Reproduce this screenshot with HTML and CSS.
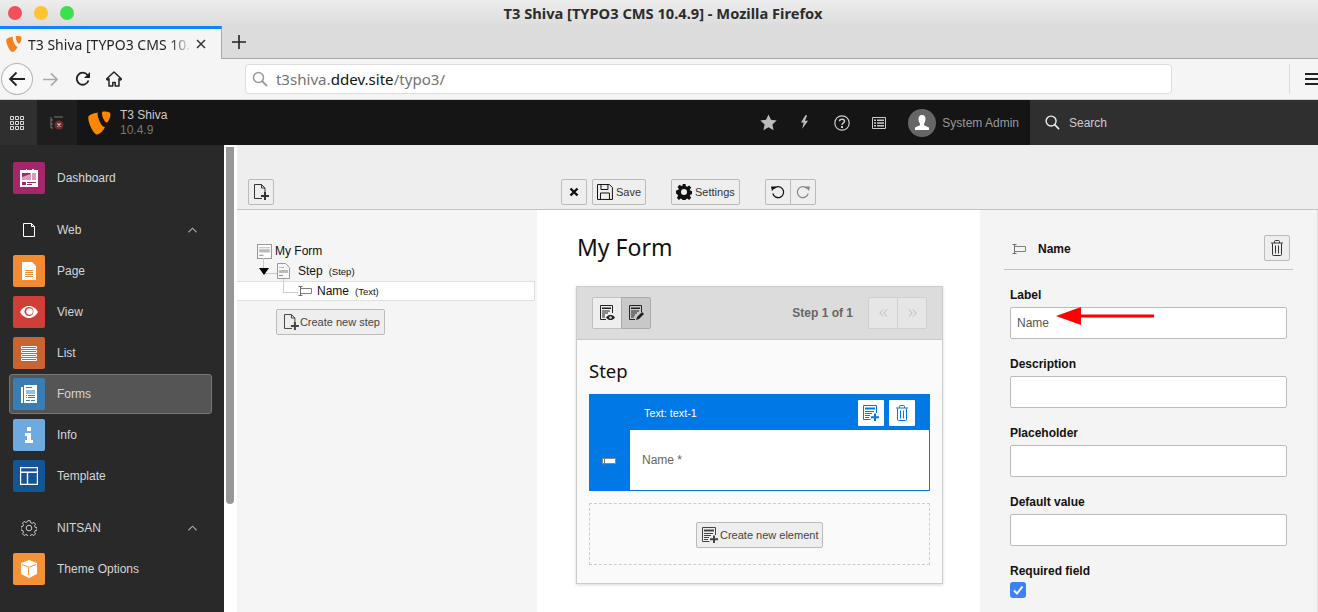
FILE: index.html
```html
<!DOCTYPE html>
<html lang="en">
<head>
<meta charset="utf-8">
<title>T3 Shiva [TYPO3 CMS 10.4.9]</title>
<link rel="stylesheet" href="styles.css">
</head>
<body>
<svg class="sprites" width="0" height="0" aria-hidden="true">
  <symbol id="t3" viewBox="0 0 16 16"><path d="M11.9 10.6c-.2.1-.4.1-.6.1-1.9 0-4.6-6.5-4.6-8.7 0-.8.2-1.1.5-1.3C4.9.9 1.6 1.9.5 3.2.3 3.5.2 3.9.2 4.5c0 3.3 3.6 11.5 6.2 11.5 1.6 0 4.3-2.6 5.5-5.4zM10.7 0c2.4 0 4.9.4 4.9 1.7 0 2.7-1.7 6-2.6 6C11.5 7.7 9.7 3.4 9.7 1.3c0-1 .4-1.3 1-1.3z"/></symbol>
  <symbol id="newpage" viewBox="0 0 16 16"><path d="M9 14.500H1.500V.5h7l3.500 3.500v4.500M8.500.5V4H12" fill="none" stroke="currentColor"/><path d="M11 8h2v3h3v2h-3v3h-2v-3H8v-2h3z" fill="currentColor"/></symbol>
  <symbol id="newel" viewBox="0 0 16 16"><path d="M7.500 14.500H.5V.5h13V8" fill="none" stroke="currentColor"/><path d="M2 2.500h10v2H2zM2 6h9v1H2zM2 8h7v1H2zM2 10h5v1H2zM2 12h4v1H2z" fill="currentColor"/><path d="M11 8.500h2v2.800h3v2h-3V16h-2v-2.700H8v-2h3z" fill="currentColor"/></symbol>
  <symbol id="trash" viewBox="0 0 16 16"><path d="M3.500 3.500v11a1 1 0 0 0 1 1h7a1 1 0 0 0 1-1v-11M2 3h12M5.500 3V1.500a1 1 0 0 1 1-1h3a1 1 0 0 1 1 1V3M6.500 5.500v8M9.500 5.500v8" fill="none" stroke="currentColor"/></symbol>
  <symbol id="field" viewBox="0 0 15 10"><path d="M3.500 2.500h11v5h-11z" fill="none" stroke="#808080"/><path d="M1.500.5h4M1.500 9.500h4M3.500.5v9" fill="none" stroke="#707070"/></symbol>
  <symbol id="chev" viewBox="0 0 10 6"><path d="M.5 5.500 5 1l4.500 4.500" fill="none" stroke="#aaa" stroke-width="1.200"/></symbol>
</svg>

<header class="titlebar">
  <div class="lights"><i class="light red"></i><i class="light yellow"></i><i class="light green"></i></div>
  <div class="wintitle">T3 Shiva [TYPO3 CMS 10.4.9] - Mozilla Firefox</div>
</header>

<div class="tabstrip">
  <div class="tab">
    <svg class="tab-logo"><use href="#t3"/></svg>
    <span class="tab-label">T3 Shiva [TYPO3 CMS 10.</span>
    <svg class="tab-x" viewBox="0 0 10 10"><path d="M1 1l8 8M9 1l-8 8" stroke="#333" stroke-width="1.500"/></svg>
  </div>
  <svg class="newtab" viewBox="0 0 14 14"><path d="M7 0v14M0 7h14" stroke="#222" stroke-width="1.600"/></svg>
</div>

<nav class="navbar">
  <div class="nav-back"><svg viewBox="0 0 18 16" width="18" height="16"><path d="M17 8H2M8.500 1.500 2 8l6.500 6.500" fill="none" stroke="#222" stroke-width="1.800"/></svg></div>
  <svg class="nav-fwd" viewBox="0 0 18 16" width="17" height="15"><path d="M1 8h15M9.500 1.500 16 8l-6.500 6.500" fill="none" stroke="#aaa" stroke-width="1.800"/></svg>
  <svg class="nav-reload" viewBox="0 0 16 16" width="16" height="16"><path d="M13.500 9.500A6 6 0 1 1 12.500 4" fill="none" stroke="#222" stroke-width="1.800"/><path d="M15 1v6H9z" fill="#222"/></svg>
  <svg class="nav-home" viewBox="0 0 16 16" width="16" height="16"><path d="M8 1 .5 8l1 1L3 7.700V15h3.800v-3.500h2.400V15H13V7.700L14.500 9l1-1z" fill="none" stroke="#222" stroke-width="1.500" stroke-linejoin="round"/></svg>
  <div class="urlbar">
    <svg viewBox="0 0 16 16" width="16" height="16"><circle cx="6.500" cy="6.500" r="5" fill="none" stroke="#999" stroke-width="1.500"/><path d="M10 10l5 5" stroke="#999" stroke-width="1.800"/></svg>
    <span class="url"><span>t3shiva.</span><b>ddev.site</b><span>/typo3/</span></span>
  </div>
  <div class="nav-sep"></div>
  <div class="burger"><i></i><i></i><i></i></div>
</nav>

<div class="topbar">
  <div class="tb-apps">
    <svg viewBox="0 0 14 14" width="14" height="14"><path d="M.5.500h3v3h-3zM5.500.500h3v3h-3zM10.500.500h3v3h-3zM.5 5.500h3v3h-3zM5.500 5.500h3v3h-3zM10.500 5.500h3v3h-3zM.5 10.500h3v3h-3zM5.500 10.500h3v3h-3zM10.500 10.500h3v3h-3z" fill="none" stroke="#ddd"/></svg>
  </div>
  <div class="tb-tree">
    <svg viewBox="0 0 14 14" width="14" height="14"><path d="M4 1h9M1 1v11M1 4h2M1 8h2M1 12h2" stroke="#777" fill="none"/><circle cx="9" cy="9" r="4.500" fill="#7a2a2a"/><path d="M7.500 7.500l3 3M10.500 7.500l-3 3" stroke="#ccc" stroke-width="1.200"/></svg>
  </div>
  <svg class="tb-logo"><use href="#t3"/></svg>
  <div class="tb-site"><div>T3 Shiva</div><div class="tb-ver">10.4.9</div></div>
  <div class="tb-spacer"></div>
  <svg class="tb-star" viewBox="0 0 16 16" width="17" height="17"><path d="M8 .5l2.300 5 5.400.6-4 3.700 1.100 5.400L8 12.500l-4.800 2.700 1.100-5.400-4-3.700 5.400-.6z" fill="#bbb"/></svg>
  <svg class="tb-bolt" viewBox="0 0 10 16" width="9" height="15"><path d="M6 0 1 8h3L2.500 15 9 6H5.500L8 0z" fill="#bbb"/></svg>
  <svg class="tb-help" viewBox="0 0 16 16" width="16" height="16"><circle cx="8" cy="8" r="7.200" fill="none" stroke="#ccc" stroke-width="1.200"/><path d="M5.500 6.200C5.500 3.500 10.500 3.500 10.500 6.200 10.500 8 8 8 8 10" fill="none" stroke="#ccc" stroke-width="1.500"/><path d="M7 11h2v2H7z" fill="#ccc"/></svg>
  <svg class="tb-list" viewBox="0 0 14 14" width="14" height="14"><path d="M.5 1.500h13v11H.5z" fill="none" stroke="#ccc"/><path d="M2 3.500h2v1.500H2zM5 3.500h7v1.500H5zM2 6.300h2v1.500H2zM5 6.300h7v1.500H5zM2 9h2v1.500H2zM5 9h7v1.500H5z" fill="#ccc"/></svg>
  <div class="tb-avatar"><svg viewBox="0 0 28 28" width="28" height="28"><circle cx="14" cy="14" r="14" fill="#666"/><path d="M14 6c2.500 0 3.700 2 3.500 4.500-.2 2-1 3.500-1.500 4.200v1.500l5 2.300V21H7v-2.500l5-2.300v-1.500c-.5-.7-1.300-2.200-1.500-4.200C10.300 8 11.500 6 14 6z" fill="#fff"/></svg></div>
  <div class="tb-user">System Admin</div>
  <div class="tb-search">
    <svg viewBox="0 0 16 16" width="15" height="15"><circle cx="6.500" cy="6.500" r="5.300" fill="none" stroke="#eee" stroke-width="1.500"/><path d="M10.300 10.300l4.700 4.700" stroke="#eee" stroke-width="1.700"/></svg>
    <span>Search</span>
  </div>
</div>

<div class="backend">
  <aside class="sidebar">
    <a class="mod"><span class="mod-ic c-dash"><svg viewBox="0 0 18 18" width="18" height="18"><path d="M0 1h6V0h12v18H0z" fill="#fff"/><path d="M7 0h5v1H7zM14 0h4v1h-4z" fill="#a4276a"/><path d="M2 4h8.500v7H2zM12 4h4v7h-4zM2 13h4v3H2zM7 13h9v1H7zM7 15h5v1H7z" fill="#a4276a"/><path d="M2 8l8.500-3v6H2zM12 4h4v7h-4z" fill="#d79dbd"/></svg></span><span>Dashboard</span></a>
    <div class="group">
      <div class="grp-head"><span class="grp-ic"><svg viewBox="0 0 12 14" width="12" height="14"><path d="M.5.500h8l3 3v10H.5z" fill="none" stroke="#fff"/><path d="M8.500.500v3h3" fill="none" stroke="#fff"/></svg></span><span class="grp-name">Web</span><svg class="chev"><use href="#chev"/></svg></div>
      <a class="mod"><span class="mod-ic c-page"><svg viewBox="0 0 14 18" width="14" height="18"><path d="M0 0h10l4 4v14H0z" fill="#fff"/><path d="M3 8h8v1H3zM3 10h8v1H3zM3 12h8v1H3zM3 14h8v1H3z" fill="#f28b33"/></svg></span><span>Page</span></a>
      <a class="mod"><span class="mod-ic c-view"><svg viewBox="0 0 18 12" width="18" height="12"><path d="M0 6c2-3.500 5-6 9-6s7 2.500 9 6c-2 3.500-5 6-9 6s-7-2.500-9-6z" fill="#fff"/><circle cx="9" cy="5.500" r="4.500" fill="#cf3f37"/><circle cx="9.500" cy="5.500" r="3.300" fill="#fff"/></svg></span><span>View</span></a>
      <a class="mod"><span class="mod-ic c-list"><svg viewBox="0 0 16 15" width="16" height="15"><path d="M.5.500h15v2H.5zM.5 4.500h15v2H.5zM.5 8.500h15v2H.5zM.5 12.500h15v2H.5z" fill="none" stroke="#fff"/></svg></span><span>List</span></a>
      <a class="mod active"><span class="mod-ic c-forms"><svg viewBox="0 0 16 18" width="16" height="18"><path d="M3 0h13v18H3zM0 2h2v16H0z" fill="#fff"/><path d="M5 2h6v1H5zM5 10h1v1H5zM7 10h7v1H7zM5 12h1v1H5zM7 12h7v1H7zM5 15h4v1H5zM10 15h4v1h-4z" fill="#3a7db3"/><path d="M5 5h9v4H5z" fill="#9dbfda"/></svg></span><span>Forms</span></a>
      <a class="mod"><span class="mod-ic c-info"><svg viewBox="0 0 8 16" width="8" height="16"><path d="M2 0h4v4H2zM0 6h6v7h2v3H0v-3h2V9H0z" fill="#fff"/></svg></span><span>Info</span></a>
      <a class="mod"><span class="mod-ic c-tpl"><svg viewBox="0 0 18 18" width="18" height="18"><path d="M.6.6h16.800v16.800H.6z" fill="none" stroke="#fff" stroke-width="1.200"/><path d="M1 4.500h16v1.400H1zM6.800 5.500h1.400V17H6.800z" fill="#fff"/></svg></span><span>Template</span></a>
    </div>
    <div class="group">
      <div class="grp-head"><span class="grp-ic"><svg viewBox="0 0 16 16" width="16" height="16"><path d="M6.800.7h2.400l.4 2 1.500.7 1.800-1 1.600 1.700-1 1.700.6 1.500 2 .5v2.400l-2 .4-.6 1.500 1 1.800-1.600 1.600-1.800-1-1.500.6-.4 2H6.800l-.4-2-1.500-.6-1.800 1-1.600-1.600 1-1.800-.6-1.500-2-.4V6.800l2-.5.600-1.500-1-1.700 1.600-1.700 1.800 1 1.500-.7z" fill="none" stroke="#ccc"/><circle cx="8" cy="8" r="2.800" fill="none" stroke="#ccc"/></svg></span><span class="grp-name">NITSAN</span><svg class="chev"><use href="#chev"/></svg></div>
      <a class="mod"><span class="mod-ic c-theme"><svg viewBox="0 0 18 18" width="18" height="18"><path d="M9 0l8 3v11l-8 4-8-4V3z" fill="#fff"/><path d="M2 4.500l6.500 2.500v8M16 4.500 9.500 7" fill="none" stroke="#f39237"/></svg></span><span>Theme Options</span></a>
    </div>
  </aside>
  <div class="scrolltrack"><div class="scrollthumb"></div></div>

  <main class="module">
    <div class="docheader">
      <div class="dh-left"><button class="btn ico"><svg width="16" height="16"><use href="#newpage"/></svg></button></div>
      <div class="dh-mid">
        <button class="btn ico"><svg viewBox="0 0 10 10" width="10" height="10"><path d="M1.500 1.500l7 7M8.500 1.500l-7 7" stroke="#111" stroke-width="2.400"/></svg></button>
        <button class="btn save"><svg viewBox="0 0 16 16" width="16" height="16"><path d="M.5.500h12l3 3v12H.5z" fill="none" stroke="#111"/><path d="M4 .5v5h7v-5M3.500 15.500V9h9v6.500" fill="none" stroke="#111"/></svg><span class="lbl">Save</span></button>
        <button class="btn settings"><svg viewBox="0 0 16 16" width="16" height="16"><path fill-rule="evenodd" d="M6.500 0h3l.4 2.200 1.300.6 1.900-1.300 2.100 2.100-1.300 1.900.6 1.300 2.200.4v3l-2.200.4-.6 1.300 1.300 1.900-2.100 2.100-1.900-1.300-1.300.6-.4 2.200h-3l-.4-2.200-1.300-.6-1.900 1.300-2.100-2.100 1.300-1.900-.6-1.300L0 9.500v-3l2.200-.4.600-1.300L1.500 2.900l2.100-2.100 1.900 1.300 1.300-.6zM8 5a3 3 0 1 0 0 6 3 3 0 0 0 0-6z" fill="#111"/></svg><span class="lbl">Settings</span></button>
        <div class="btn-pair">
          <button class="btn ico"><svg viewBox="0 0 14 14" width="14" height="14"><path d="M3 3.500A5.500 5.500 0 1 1 1.800 8.500" fill="none" stroke="#111" stroke-width="1.200"/><path d="M0 1.500l5 0L1 6z" fill="#111"/></svg></button>
          <button class="btn ico off"><svg viewBox="0 0 14 14" width="14" height="14"><path d="M11 3.500A5.500 5.500 0 1 0 12.200 8.500" fill="none" stroke="#888" stroke-width="1.200"/><path d="M14 1.500l-5 0 4 4.500z" fill="#888"/></svg></button>
        </div>
      </div>
    </div>
    <div class="panes">
      <section class="tree">
        <div class="t-row t-root"><svg class="t-form" viewBox="0 0 14 14" width="15" height="15"><path d="M.5.500h13v13H.5z" fill="#fff" stroke="#999"/><path d="M2 3h10v1H2zM2 5h10v3H2z" fill="#bbb"/><path d="M2 10h4v1H2z" fill="#5a9bd8"/></svg><span>My Form</span></div>
        <div class="t-row t-step"><span class="t-caret"></span><svg viewBox="0 0 13 16" width="13" height="16"><path d="M.5.500h8l4 4v11H.5z" fill="#f8f8f8" stroke="#999"/><path d="M2 4h5v1H2zM2 7h9v3H2z" fill="#bbb"/><path d="M2 12h4v1H2z" fill="#5a9bd8"/></svg><span>Step</span><small>(Step)</small></div>
        <div class="t-row t-name"><svg width="15" height="10"><use href="#field"/></svg><span>Name</span><small>(Text)</small></div>
        <button class="btn new-step"><svg width="16" height="16"><use href="#newpage"/></svg><span class="lbl">Create new step</span></button>
      </section>
      <section class="stage">
        <h1>My Form</h1>
        <div class="card">
          <div class="card-head">
            <div class="mode">
              <button class="mode-btn"><svg viewBox="0 0 16 16" width="16" height="16"><path d="M7 14.500H1.500V.5h12V8" fill="none" stroke="#222"/><path d="M3 2.500h9v1.500H3zM3 5.500h8v1H3zM3 7.500h6v1H3zM3 9.500h3v1H3zM3 11.500h3v1H3z" fill="#222"/><path d="M7 12.500c1.500-2 3-2.500 4.500-2.500s3 .5 4.500 2.500c-1.500 2-3 2.500-4.500 2.500S8.500 14.500 7 12.500z" fill="#222"/><circle cx="11.500" cy="12.500" r="1.300" fill="#ddd"/></svg></button>
              <button class="mode-btn on"><svg viewBox="0 0 16 16" width="16" height="16"><path d="M7 14.500H1.500V.5h12V7" fill="none" stroke="#222"/><path d="M3 2.500h9v1.500H3zM3 5.500h8v1H3zM3 7.500h6v1H3zM3 9.500h4v1H3zM3 11.500h3v1H3z" fill="#222"/><path d="M8 15l1-3 5-5 2 2-5 5z" fill="#222"/></svg></button>
            </div>
            <div class="stepcount">Step 1 of 1</div>
            <div class="pager">
              <button class="pg-btn"><svg viewBox="0 0 9 8" width="9" height="8"><path d="M4 .5.8 4 4 7.500M8 .5 4.800 4 8 7.500" fill="none" stroke="#bbb"/></svg></button>
              <button class="pg-btn"><svg viewBox="0 0 9 8" width="9" height="8"><path d="M1 .5 4.200 4 1 7.500M5 .5 8.200 4 5 7.500" fill="none" stroke="#bbb"/></svg></button>
            </div>
          </div>
          <div class="card-body">
            <h2>Step</h2>
            <div class="el">
              <div class="el-grip"><svg viewBox="0 0 14 8" width="14" height="8"><path d="M.5 1.500h13v5H.5z" fill="#fff" stroke="#888"/><path d="M2.500 0v8" stroke="#777"/></svg></div>
              <div class="el-main">
                <div class="el-head"><span class="el-title">Text: text-1</span>
                  <div class="el-tools">
                    <button class="el-btn"><svg width="16" height="16"><use href="#newel"/></svg></button>
                    <button class="el-btn"><svg width="16" height="16"><use href="#trash"/></svg></button>
                  </div>
                </div>
                <div class="el-body">Name *</div>
              </div>
            </div>
            <div class="dropzone"><button class="btn new-el"><svg width="16" height="16"><use href="#newel"/></svg><span class="lbl">Create new element</span></button></div>
          </div>
        </div>
      </section>
      <section class="inspector">
        <div class="ins-head">
          <svg width="15" height="10"><use href="#field"/></svg>
          <b>Name</b>
          <button class="btn ico"><svg width="16" height="16"><use href="#trash"/></svg></button>
        </div>
        <div class="fieldset">
          <label class="f">Label<span class="input">Name</span>
            <svg class="arrow" viewBox="0 0 98 18" width="98" height="18"><path d="M0 9 25 0v7.500h73v3H25V18z" fill="#f00"/></svg>
          </label>
          <label class="f">Description<span class="input"></span></label>
          <label class="f">Placeholder<span class="input"></span></label>
          <label class="f">Default value<span class="input"></span></label>
          <label class="f">Required field<span class="check"><svg viewBox="0 0 12 12" width="12" height="12"><path d="M2 6.500 5 9.500 10.500 2.500" fill="none" stroke="#fff" stroke-width="2"/></svg></span></label>
        </div>
      </section>
    </div>
  </main>
</div>
</body>
</html>
```
FILE: styles.css
```css
* { box-sizing: border-box; }
html, body { margin: 0; height: 612px; overflow: hidden; }
body { display: flex; flex-direction: column; width: 1318px; font: 12px/1.2 "Liberation Sans", Arial, sans-serif; color: #333; background: #fff; }
.sprites { position: absolute; }
button { font: inherit; margin: 0; }

.titlebar { flex: 0 0 26px; display: flex; align-items: center; position: relative; background: linear-gradient(#ededed, #dcdcdc); }
.lights { display: flex; gap: 12px; padding-left: 8px; }
.light { width: 14px; height: 14px; border-radius: 50%; display: block; }
.red { background: #f4505a; }
.yellow { background: #fdc42f; }
.green { background: #3be04a; }
.wintitle { position: absolute; left: 8px; right: 0; text-align: center; font: 700 14.650px/24px "Noto Sans", sans-serif; color: #2c2c2c; }

.tabstrip { flex: 0 0 33px; display: flex; align-items: stretch; background: #dcdcdc; border-bottom: 1px solid #a8a8a8; }
.tab { width: 222px; margin-bottom: -1px; display: flex; align-items: center; background: #f5f5f5; border-top: 3px solid #0a84ff; border-right: 1px solid #a8a8a8; padding: 0 12px 0 6px; }
.tab-logo { width: 16px; height: 16px; fill: #f58220; flex: none; }
.tab-label { margin-left: 6px; width: 165px; flex: none; white-space: nowrap; font: 14px "Noto Sans", sans-serif; color: #222; -webkit-mask-image: linear-gradient(90deg, #000 86%, transparent 99%); mask-image: linear-gradient(90deg, #000 86%, transparent 99%); }
.tab-x { width: 10px; height: 10px; margin-left: 3px; flex: none; }
.newtab { width: 14px; height: 14px; align-self: center; margin-left: 10px; }

.navbar { flex: 0 0 41px; display: flex; align-items: center; background: #f5f5f5; border-bottom: 1px solid #d4d4d4; padding-left: 1px; }
.nav-back { width: 32px; height: 32px; border: 1px solid #b4b4b4; border-radius: 50%; background: #fafafa; display: flex; align-items: center; justify-content: center; }
.nav-fwd { margin-left: 9px; }
.nav-reload { margin-left: 16px; }
.nav-home { margin-left: 15px; }
.urlbar { margin-left: 123px; width: 928px; height: 30px; display: flex; align-items: center; gap: 8px; padding-left: 6px; background: #fff; border: 1px solid #ddd; border-radius: 4px; }
.url { font: 15.100px "Noto Sans", sans-serif; color: #737373; }
.url b { font-weight: 400; color: #111; }
.nav-sep { width: 1px; height: 30px; margin-left: 117px; background: #ddd; }
.burger { margin-left: 15px; width: 13px; display: flex; flex-direction: column; gap: 3px; }
.burger i { display: block; height: 2px; background: #222; }

.topbar { flex: 0 0 45px; display: flex; align-items: center; background: #151515; color: #ccc; }
.tb-apps { width: 37px; height: 100%; background: #2f2f2f; display: flex; align-items: center; justify-content: center; padding-right: 4px; }
.tb-tree { width: 40px; height: 100%; background: #1e1e1e; display: flex; align-items: center; justify-content: center; }
.tb-logo { width: 23px; height: 24px; margin-left: 11px; fill: #ff8700; flex: none; }
.tb-site { margin-left: 9px; line-height: 15px; }
.tb-ver { color: #777; }
.tb-spacer { flex: 1; }
.tb-star { flex: none; }
.tb-bolt { margin-left: 23px; flex: none; }
.tb-help { margin-left: 25px; flex: none; }
.tb-list { margin-left: 22px; flex: none; }
.tb-avatar { margin-left: 22px; width: 28px; height: 28px; }
.tb-user { margin-left: 6px; margin-right: 11px; padding-top: 2px; color: #999; }
.tb-search { width: 288px; height: 100%; background: #2f2f2f; display: flex; align-items: center; gap: 9px; padding-left: 15px; color: #ccc; }
.tb-search span { padding-top: 2px; }

.backend { flex: 1; display: flex; min-height: 0; }
.sidebar { width: 224px; flex: none; background: #292929; padding-top: 17px; color: #d6d6d6; }
.mod { display: flex; align-items: center; gap: 12px; height: 32px; margin: 0 12px 9px 13px; position: relative; }
.mod.active::before { content: ""; position: absolute; left: -4px; right: 0; top: -4px; bottom: -4px; border: 1px solid #777; border-radius: 3px; background: #555; }
.mod > * { position: relative; }
.mod-ic { width: 32px; height: 32px; border-radius: 2px; display: flex; align-items: center; justify-content: center; flex: none; }
.c-dash { background: #a4276a; }
.c-page { background: #f28b33; }
.c-view { background: #cf3f37; }
.c-list { background: #c86430; }
.c-forms { background: #3a7db3; }
.c-info { background: #6daae0; }
.c-tpl { background: #145694; }
.c-theme { background: #f39237; }
.group { margin-top: 20px; }
.grp-head { display: flex; align-items: center; height: 32px; margin-bottom: 9px; padding-left: 13px; }
.grp-ic { width: 32px; display: flex; justify-content: center; flex: none; }
.grp-name { margin-left: 12px; flex: 1; }
.chev { width: 9px; height: 6px; margin-right: 27px; }

.scrolltrack { width: 13px; flex: none; background: #fff; padding: 2px 1px 0 2px; }
.scrollthumb { width: 8px; height: 357px; background: #989898; border-radius: 0 0 4px 4px; }

.module { flex: 1; min-width: 0; display: flex; flex-direction: column; }
.docheader { flex: 0 0 65px; display: flex; align-items: flex-end; background: #eee; border-bottom: 1px solid #c3c3c3; padding-bottom: 4px; }
.dh-left { width: 324px; padding-left: 11px; }
.dh-mid { display: flex; }
.btn { height: 26px; display: inline-flex; align-items: center; gap: 3px; padding: 0 4px; background: #eee; border: 1px solid #bbb; border-radius: 2px; color: #333; font-size: 11px; white-space: nowrap; }
.lbl { padding-top: 2px; }
.ico { width: 26px; justify-content: center; padding: 0; }
.save { width: 54px; margin-left: 5px; }
.settings { width: 69px; margin-left: 25px; }
.btn-pair { display: flex; margin-left: 25px; }
.btn-pair .btn:first-child { border-radius: 2px 0 0 2px; }
.btn-pair .btn + .btn { margin-left: -1px; border-radius: 0 2px 2px 0; }

.panes { flex: 1; display: flex; min-height: 0; }
.tree { width: 300px; flex: none; background: #f5f5f5; padding-top: 31px; color: #111; }
.t-row { display: flex; align-items: center; height: 20px; position: relative; }
.t-root { padding-left: 20px; gap: 3px; }
.t-root::after { content: ""; position: absolute; left: 26px; top: 17px; width: 14px; height: 15px; border-left: 1px solid #ccc; border-bottom: 1px solid #ccc; z-index: 0; }
.t-step { padding-left: 22px; gap: 6px; }
.t-step svg { margin-right: 2px; position: relative; z-index: 1; }
.t-step::after { content: ""; position: absolute; left: 46px; top: 17px; height: 4px; border-left: 1px solid #ccc; }
.t-caret { width: 0; height: 0; border: 5px solid transparent; border-top: 7px solid #000; border-bottom: 0; margin-right: 2px; position: relative; z-index: 1; }
.t-name { margin-right: 2px; padding-left: 60px; gap: 5px; background: #fff; border: 1px solid #e0e0e0; border-left: 0; }
.t-name span { margin-right: 1px; }
.t-name::before { content: ""; position: absolute; left: 46px; top: 0; width: 14px; height: 10px; border-left: 1px solid #ccc; border-bottom: 1px solid #ccc; }
.t-name svg { position: relative; }
small { font-size: 9.500px; padding-top: 2px; }
.new-step { margin: 8px 0 0 39px; width: 109px; padding: 0 4px 0 6px; gap: 1px; color: #444; }

.stage { width: 443px; flex: none; background: #fff; padding: 23px 37px 0 40px; }
h1 { margin: 0 0 24px; font: 400 23px/29px "Noto Sans", sans-serif; color: #111; }
.card { width: 367px; height: 298px; margin-left: -1px; background: #fafafa; border: 1px solid #ccc; box-shadow: 0 1px 3px rgba(0,0,0,.15); }
.card-head { height: 53px; display: flex; align-items: center; padding: 0 15px; background: #dcdcdc; border-bottom: 1px solid #c8c8c8; }
.mode { display: flex; }
.mode-btn { width: 30px; height: 32px; padding: 0; background: #eee; border: 1px solid #c0c0c0; border-radius: 2px 0 0 2px; display: flex; align-items: center; justify-content: center; }
.mode-btn.on { margin-left: -1px; background: #c8c8c8; border-color: #aaa; border-radius: 0 2px 2px 0; }
.stepcount { margin-left: auto; font-weight: 700; color: #666; }
.pager { display: flex; margin-left: 15px; }
.pg-btn { width: 30px; height: 32px; padding: 0; border: 1px solid #d0d0d0; background: #e6e6e6; border-radius: 2px 0 0 2px; display: flex; align-items: center; justify-content: center; }
.pg-btn + .pg-btn { margin-left: -1px; border-radius: 0 2px 2px 0; }
.card-body { padding: 19px 12px 0; }
h2 { margin: 0 0 12px; font: 400 18.500px/23px "Noto Sans", sans-serif; color: #111; }
.el { height: 97px; width: 341px; display: flex; background: #0078e6; border: 1px solid #0078e6; }
.el-grip { width: 40px; flex: none; display: flex; align-items: center; justify-content: center; padding-top: 36px; padding-right: 3px; }
.el-main { flex: 1; display: flex; flex-direction: column; }
.el-head { height: 35px; display: flex; align-items: center; padding: 0 14px 0 14px; color: #fff; font-size: 10.800px; }
.el-title { padding-top: 2px; }
.el-tools { margin-left: auto; display: flex; gap: 5px; }
.el-btn { width: 26px; height: 26px; padding: 0; border: 0; background: #fff; color: #0078e6; border-radius: 1px; display: flex; align-items: center; justify-content: center; }
.el-body { flex: 1; background: #fff; padding: 23px 12px 0; color: #666; line-height: 14px; }
.dropzone { height: 62px; width: 341px; margin-top: 12px; border: 1px dashed #ccc; display: flex; align-items: center; justify-content: center; padding-top: 2px; }
.new-el { width: 127px; gap: 2px; color: #444; padding: 0 3px 0 5px; }

.inspector { flex: 1; min-width: 0; background: #f4f4f4; padding: 25px 25px 0 24px; border-right: 1px solid #ddd; }
.ins-head { width: 289px; height: 35px; display: flex; align-items: flex-start; border-bottom: 1px solid #c4c4c4; padding: 0 3px 0 7px; }
.ins-head > svg { margin-top: 9px; }
.ins-head b { margin: 7px 0 0 12px; color: #111; }
.ins-head .btn { margin-left: auto; }
.fieldset { padding: 18px 0 0 6px; }
.f { display: block; position: relative; font-weight: 700; color: #111; height: 69px; line-height: 14px; }
.input { display: block; width: 277px; height: 32px; margin-top: 5px; background: #fff; border: 1px solid #bbb; border-radius: 2px; padding: 0 6px; font-weight: 400; line-height: 30px; color: #555; }
.arrow { position: absolute; left: 46px; top: 19px; }
.check { margin-top: 4px; width: 16px; height: 16px; display: flex; align-items: center; justify-content: center; background: #3b82f6; border-radius: 3px; }
```
